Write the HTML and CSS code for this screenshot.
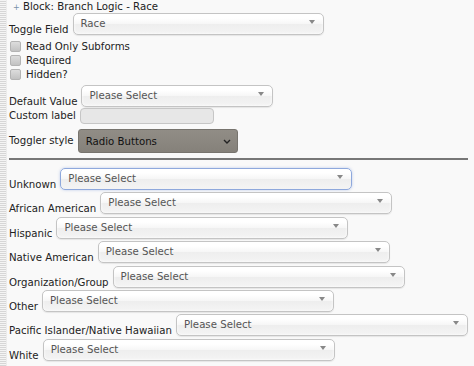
FILE: index.html
```html
<!DOCTYPE html>
<html lang="en">
<head>
  <meta charset="UTF-8">
  <meta name="viewport" content="width=device-width, initial-scale=1.0">
  <title>Branch Logic - Race</title>
  <link rel="stylesheet" href="styles.css">
</head>
<body>
  <div class="gutter"></div>

  <div class="content">
    <div class="block-title"><span class="plus">+</span> Block: Branch Logic - Race</div>

    <div class="field toggle-field">
      <label>Toggle Field</label>
      <div class="chosen wide"><span>Race</span><b class="arrow"></b></div>
    </div>

    <div class="checks">
      <div class="check"><span class="box"></span>Read Only Subforms</div>
      <div class="check"><span class="box"></span>Required</div>
      <div class="check"><span class="box"></span>Hidden?</div>
    </div>

    <div class="field default-value">
      <label>Default Value</label>
      <div class="chosen medium"><span>Please Select</span><b class="arrow"></b></div>
    </div>

    <div class="field centered custom-label">
      <label>Custom label</label>
      <div class="text-input"></div>
    </div>

    <div class="field centered toggler">
      <label>Toggler style</label>
      <div class="dark-select">
        <span>Radio Buttons</span>
        <svg width="8" height="5" viewBox="0 0 8 5"><path d="M1 1 L4 4 L7 1" fill="none" stroke="#222" stroke-width="1.4"/></svg>
      </div>
    </div>

    <div class="divider"></div>

    <div class="options">
      <div class="field"><label>Unknown</label><div class="chosen focus"><span>Please Select</span><b class="arrow"></b></div></div>
      <div class="field"><label>African American</label><div class="chosen"><span>Please Select</span><b class="arrow"></b></div></div>
      <div class="field"><label>Hispanic</label><div class="chosen"><span>Please Select</span><b class="arrow"></b></div></div>
      <div class="field"><label>Native American</label><div class="chosen"><span>Please Select</span><b class="arrow"></b></div></div>
      <div class="field"><label>Organization/Group</label><div class="chosen"><span>Please Select</span><b class="arrow"></b></div></div>
      <div class="field"><label>Other</label><div class="chosen"><span>Please Select</span><b class="arrow"></b></div></div>
      <div class="field"><label>Pacific Islander/Native Hawaiian</label><div class="chosen"><span>Please Select</span><b class="arrow"></b></div></div>
      <div class="field"><label>White</label><div class="chosen"><span>Please Select</span><b class="arrow"></b></div></div>
    </div>
  </div>
</body>
</html>
```

FILE: styles.css
```css
body {
  font-family: "DejaVu Sans", Verdana, sans-serif;
  font-size: 10.2px;
  color: #222;
  margin: 0;
  background-color: #f9f9f9;
  display: flex;
  min-height: 366px;
  overflow: hidden;
}
.gutter {
  width: 6px;
  flex-shrink: 0;
  background: repeating-linear-gradient(#f4f4f4 0 1px, #d6d6d6 1px 2px);
  border-right: 1px solid #ececec;
}
.content {
  flex: 1;
  padding: 0 6px 0 2px;
}
.block-title {
  line-height: 12px;
  padding-top: 1px;
  padding-left: 4px;
}
.plus {
  font-size: 8px;
  color: #7890a8;
}
.field {
  display: flex;
  align-items: flex-end;
  gap: 4px;
}
.field label {
  line-height: 12px;
  margin-bottom: -1px;
  white-space: nowrap;
}
.field.centered {
  align-items: center;
}
.field.centered label {
  margin-bottom: 0;
}
.toggle-field {
  margin-top: -1px;
}
.chosen {
  width: 292px;
  height: 22px;
  box-sizing: border-box;
  flex-shrink: 0;
  display: flex;
  align-items: center;
  padding: 0 8px 1px 7px;
  border: 1px solid #c4c4c4;
  border-radius: 5px;
  background: linear-gradient(#fff 20%, #f6f6f6 50%, #eee 52%, #f4f4f4 100%);
  box-shadow: inset 0 0 3px #fff, 0 1px 1px rgba(0,0,0,0.08);
  color: #555;
}
.chosen span {
  flex: 1;
}
.chosen.wide {
  width: 251px;
}
.chosen.medium {
  width: 192px;
}
.chosen.focus {
  border-color: #8ea8dc;
  box-shadow: 0 0 3px rgba(80,120,210,0.35);
}
.arrow {
  width: 0;
  height: 0;
  border-left: 3px solid transparent;
  border-right: 3px solid transparent;
  border-top: 4px solid #888;
  margin-bottom: 3px;
}
.checks {
  margin-top: 4px;
}
.check {
  height: 14px;
  display: flex;
  align-items: center;
  gap: 5px;
}
.box {
  width: 11px;
  height: 11px;
  box-sizing: border-box;
  border: 1px solid #b4b4b4;
  border-radius: 2px;
  background: linear-gradient(#ddd, #c2c2c2);
  margin-left: 1px;
}
.default-value {
  margin-top: 4px;
}
.custom-label {
  margin-top: 1px;
}
.text-input {
  width: 134px;
  height: 16px;
  box-sizing: border-box;
  border: 1px solid #c6c6c6;
  border-radius: 4px;
  background: #e7e7e7;
}
.toggler {
  margin-top: 5px;
}
.dark-select {
  width: 160px;
  height: 24px;
  box-sizing: border-box;
  display: flex;
  align-items: center;
  justify-content: space-between;
  padding: 0 6px 0 7px;
  border: 1px solid #77746e;
  border-radius: 3px;
  background: linear-gradient(#918d86, #85817a);
  color: #111;
}
.divider {
  height: 2px;
  background: #777;
  margin-top: 5px;
}
.options {
  margin-top: 8px;
  display: flex;
  flex-direction: column;
  gap: 2.4px;
}
```
